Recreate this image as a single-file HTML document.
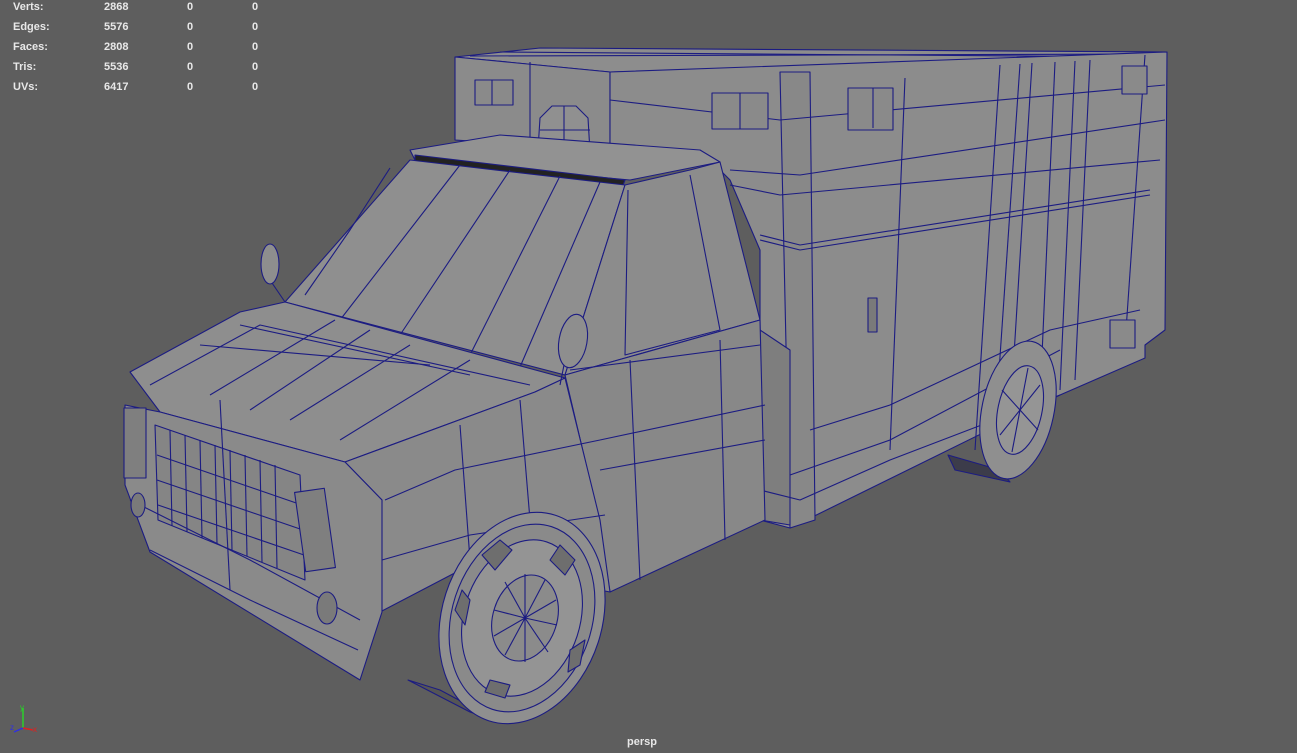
<!DOCTYPE html>
<html><head><style>
html,body{margin:0;padding:0;background:#5e5e5e;width:1297px;height:753px;overflow:hidden;font-family:"Liberation Sans",Arial,sans-serif}
.st{position:absolute;color:#e8e8e8;font-size:11px;font-weight:bold}
</style></head><body>
<svg width="1297" height="753" style="position:absolute;left:0;top:0" xmlns="http://www.w3.org/2000/svg">
<g stroke="#1c1c82" stroke-width="1.1" stroke-linejoin="round">
<polygon points="455,57 540,48 1167,52 1085,62 610,72" fill="#8d8d8d"/>
<polyline points="470,56 1160,54" fill="none"/><polyline points="500,52 1150,57" fill="none"/>
<polygon points="455,57 610,72 610,150 455,140" fill="#8b8b8b"/>
<polygon points="610,72 1167,52 1165,330 1145,345 1145,358 1060,395 790,528 760,520 760,250 730,180 700,150 610,150" fill="#8c8c8c"/>
<polygon points="780,72 810,72 815,520 790,528" fill="#888"/>
<polygon points="760,330 790,350 790,525 760,520" fill="#7e7e7e"/>
<polyline points="610,100 780,120 1165,85" fill="none"/>
<polyline points="730,170 800,175 1165,120" fill="none"/>
<polyline points="730,185 780,195 1160,160" fill="none"/>
<polyline points="760,235 800,245 1150,190" fill="none"/>
<polyline points="760,240 800,250 1150,195" fill="none"/>
<polyline points="810,430 890,405 1050,330 1140,310" fill="none"/>
<polyline points="790,475 890,440 1060,350" fill="none"/>
<polyline points="760,490 800,500 890,460 1060,395" fill="none"/>
<line x1="905" y1="78" x2="890" y2="450"/><line x1="1000" y1="65" x2="975" y2="450"/>
<line x1="1020" y1="64" x2="995" y2="430"/><line x1="1032" y1="63" x2="1010" y2="420"/>
<line x1="1055" y1="62" x2="1040" y2="400"/><line x1="1075" y1="61" x2="1060" y2="390"/>
<line x1="1090" y1="60" x2="1075" y2="380"/><line x1="1145" y1="55" x2="1125" y2="345"/>
<line x1="530" y1="62" x2="530" y2="145"/>
<rect x="475" y="80" width="38" height="25" fill="#8a8a8a"/><line x1="492" y1="80" x2="492" y2="105"/>
<rect x="712" y="93" width="56" height="36" fill="#8a8a8a"/><line x1="740" y1="93" x2="740" y2="129"/>
<rect x="848" y="88" width="45" height="42" fill="#8a8a8a"/><line x1="873" y1="88" x2="873" y2="128"/>
<rect x="1122" y="66" width="25" height="28" fill="#8a8a8a"/>
<rect x="1110" y="320" width="25" height="28" fill="#8a8a8a"/>
<rect x="868" y="298" width="9" height="34" fill="#7a7a7a"/>
<rect x="726" y="366" width="12" height="40" fill="#7a7a7a"/>
<polygon points="948,455 1000,470 1010,482 955,470" fill="#3c3c4a"/>
<ellipse cx="1018" cy="410" rx="36" ry="70" transform="rotate(12 1018 410)" fill="#8f8f8f"/>
<ellipse cx="1020" cy="410" rx="22" ry="45" transform="rotate(12 1020 410)" fill="#959595"/>
<g fill="none"><line x1="1020" y1="410" x2="1028" y2="368"/><line x1="1020" y1="410" x2="1040" y2="385"/><line x1="1020" y1="410" x2="1038" y2="430"/><line x1="1020" y1="410" x2="1012" y2="452"/><line x1="1020" y1="410" x2="1000" y2="435"/><line x1="1020" y1="410" x2="1002" y2="390"/></g>
<polygon points="538,150 540,118 552,106 576,106 588,118 590,152" fill="#909090"/>
<line x1="540" y1="130" x2="590" y2="130"/><line x1="564" y1="106" x2="564" y2="152"/>
<polygon points="410,150 500,135 700,150 720,162 630,180 415,160" fill="#929292"/>
<polygon points="415,155 625,180 622,188 415,162" fill="#222"/>
<polygon points="410,160 625,185 565,375 285,302" fill="#8f8f8f"/>
<line x1="460" y1="165" x2="340" y2="320"/><line x1="510" y1="170" x2="400" y2="335"/>
<line x1="560" y1="176" x2="470" y2="355"/><line x1="600" y1="182" x2="520" y2="367"/>
<polyline points="390,168 350,230 305,295" fill="none"/>
<polygon points="625,185 690,170 720,162 760,320 565,375" fill="#8c8c8c"/>
<polyline points="690,175 720,330 625,355 628,190" fill="none"/>
<polygon points="565,375 760,320 765,520 610,592 598,515" fill="#888"/>
<polyline points="570,370 760,345" fill="none"/>
<line x1="630" y1="360" x2="640" y2="580"/><line x1="720" y1="340" x2="725" y2="540"/>
<polyline points="600,440 765,405" fill="none"/><polyline points="600,470 765,440" fill="none"/>
<polygon points="130,372 240,312 285,302 565,378 535,392 345,462 160,412" fill="#8e8e8e"/>
<polyline points="150,385 260,325 530,385" fill="none"/>
<polyline points="200,345 430,365" fill="none"/><polyline points="240,325 470,375" fill="none"/>
<line x1="210" y1="395" x2="335" y2="320"/><line x1="290" y1="420" x2="410" y2="345"/>
<line x1="340" y1="440" x2="470" y2="360"/><line x1="250" y1="410" x2="370" y2="330"/>
<polygon points="345,462 535,392 565,378 600,520 610,592 470,565 380,612 382,500" fill="#8a8a8a"/>
<polyline points="385,500 455,470 600,440" fill="none"/><polyline points="382,560 470,535 605,515" fill="none"/>
<line x1="460" y1="425" x2="470" y2="560"/><line x1="520" y1="400" x2="530" y2="520"/>
<polygon points="125,405 160,412 345,462 382,500 382,612 360,680 150,552 125,485" fill="#8a8a8a"/>
<polygon points="155,425 300,475 305,580 158,520" fill="#858585"/>
<g fill="none">
<line x1="170" y1="430" x2="172" y2="526"/><line x1="185" y1="435" x2="187" y2="532"/><line x1="200" y1="440" x2="202" y2="538"/>
<line x1="215" y1="445" x2="217" y2="544"/><line x1="230" y1="450" x2="232" y2="550"/><line x1="245" y1="455" x2="247" y2="556"/>
<line x1="260" y1="460" x2="262" y2="562"/><line x1="275" y1="465" x2="277" y2="568"/>
<line x1="157" y1="455" x2="302" y2="505"/><line x1="157" y1="480" x2="303" y2="530"/><line x1="158" y1="505" x2="304" y2="555"/>
<polyline points="130,500 250,560 360,620" /><polyline points="150,550 250,600 358,650"/>
<line x1="220" y1="400" x2="230" y2="590"/>
</g>
<rect x="300" y="490" width="30" height="80" fill="#7f7f7f" transform="rotate(-8 315 530)"/>
<rect x="124" y="408" width="22" height="70" fill="#7f7f7f"/>
<ellipse cx="138" cy="505" rx="7" ry="12" fill="#7a7a7a"/>
<ellipse cx="327" cy="608" rx="10" ry="16" fill="#7a7a7a"/>
<line x1="270" y1="280" x2="285" y2="302"/>
<ellipse cx="270" cy="264" rx="9" ry="20" fill="#8e8e8e"/>
<line x1="565" y1="360" x2="560" y2="385"/>
<ellipse cx="573" cy="341" rx="14" ry="27" transform="rotate(10 573 341)" fill="#8e8e8e"/>
<polygon points="408,680 440,690 500,722 470,712" fill="#555"/>
<ellipse cx="522" cy="618" rx="80" ry="108" transform="rotate(18 522 618)" fill="#8f8f8f"/>
<ellipse cx="522" cy="618" rx="70" ry="96" transform="rotate(18 522 618)" fill="#8a8a8a"/>
<ellipse cx="522" cy="618" rx="58" ry="80" transform="rotate(18 522 618)" fill="#949494"/>
<polygon points="482,555 500,540 512,550 495,570" fill="#6e6e6e"/>
<polygon points="560,545 575,560 565,575 550,560" fill="#6e6e6e"/>
<polygon points="455,610 462,590 470,600 465,625" fill="#6e6e6e"/>
<polygon points="570,650 585,640 580,665 568,672" fill="#6e6e6e"/>
<polygon points="490,680 510,685 505,698 485,692" fill="#6e6e6e"/>
<ellipse cx="525" cy="618" rx="32" ry="44" transform="rotate(18 525 618)" fill="#8b8b8b"/>
<g fill="none"><line x1="525" y1="618" x2="525" y2="574"/><line x1="525" y1="618" x2="545" y2="580"/><line x1="525" y1="618" x2="556" y2="600"/>
<line x1="525" y1="618" x2="557" y2="625"/><line x1="525" y1="618" x2="548" y2="652"/><line x1="525" y1="618" x2="525" y2="662"/>
<line x1="525" y1="618" x2="505" y2="655"/><line x1="525" y1="618" x2="494" y2="636"/><line x1="525" y1="618" x2="494" y2="610"/>
<line x1="525" y1="618" x2="505" y2="582"/></g>
</g>
<line x1="23" y1="728" x2="23" y2="708" stroke="#2ad02a" stroke-width="1.5"/>
<line x1="23" y1="728" x2="33" y2="730" stroke="#e02020" stroke-width="1.5"/>
<line x1="23" y1="728" x2="14" y2="732" stroke="#3030e0" stroke-width="1.5"/>
<text x="20" y="710" fill="#2ad02a" font-size="8" font-family="Liberation Sans">y</text>
<text x="33" y="732" fill="#e02020" font-size="8" font-family="Liberation Sans">x</text>
<text x="10" y="730" fill="#3030e0" font-size="8" font-family="Liberation Sans">z</text>
</svg>
<div class="st" style="left:13px;top:1px">Verts:</div><div class="st" style="left:104px;top:1px">2868</div><div class="st" style="left:187px;top:1px">0</div><div class="st" style="left:252px;top:1px">0</div>
<div class="st" style="left:13px;top:21px">Edges:</div><div class="st" style="left:104px;top:21px">5576</div><div class="st" style="left:187px;top:21px">0</div><div class="st" style="left:252px;top:21px">0</div>
<div class="st" style="left:13px;top:41px">Faces:</div><div class="st" style="left:104px;top:41px">2808</div><div class="st" style="left:187px;top:41px">0</div><div class="st" style="left:252px;top:41px">0</div>
<div class="st" style="left:13px;top:61px">Tris:</div><div class="st" style="left:104px;top:61px">5536</div><div class="st" style="left:187px;top:61px">0</div><div class="st" style="left:252px;top:61px">0</div>
<div class="st" style="left:13px;top:81px">UVs:</div><div class="st" style="left:104px;top:81px">6417</div><div class="st" style="left:187px;top:81px">0</div><div class="st" style="left:252px;top:81px">0</div>
<div class="st" style="left:627px;top:736px;font-size:11px">persp</div>
</body></html>
